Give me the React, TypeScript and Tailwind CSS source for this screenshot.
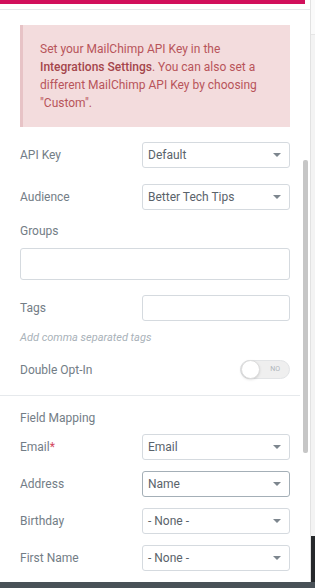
import React from 'react';

const Caret = () => (
  <svg width="8" height="4" viewBox="0 0 8 4" className="shrink-0">
    <path d="M0 0 L8 0 L4 4 Z" fill="#7d868e" />
  </svg>
);

const Select = ({ value, active = false }: { value: string; active?: boolean }) => (
  <div
    className={`flex h-[26px] w-[148px] items-center justify-between rounded-[3px] border bg-white pl-[5px] pr-[8px] text-[12px] text-[#5a636b] ${
      active ? 'border-[#a4afb7]' : 'border-[#d5dadf]'
    }`}
  >
    <span>{value}</span>
    <Caret />
  </div>
);

const Row = ({ label, children, className = '' }: { label: React.ReactNode; children: React.ReactNode; className?: string }) => (
  <div className={`flex items-center justify-between ${className}`}>
    <span className="text-[12px] text-[#737d86]">{label}</span>
    {children}
  </div>
);

export default function App() {
  return (
    <div className="flex h-[588px] w-[315px] flex-col overflow-hidden bg-white" style={{ fontFamily: 'Roboto, "Noto Sans", sans-serif' }}>
      <div className="flex h-[582px]">
        {/* Panel */}
        <div className="flex w-[310px] flex-col">
          <div className="h-[4px] w-[305px] bg-[#d1105c]" />
          <div className="h-[6px] border-b border-[#e6e9ec]" />

          <div className="flex flex-1">
            {/* Scroll content */}
            <div className="flex w-[300px] flex-col">
              <div className="pl-5 pr-[10px] pt-[15px]">
                {/* Notice */}
                <div className="h-[102px] border-l-[3px] border-[#e7c3c6] bg-[#f3dcdd] py-[15px] pl-[17px] pr-[14px] text-[12px] leading-[18px] text-[#b8545a]">
                  <p>
                    Set your MailChimp API Key in the <b className="font-medium text-[#a4454b]">Integrations Settings</b>. You can also set a different MailChimp API Key by choosing "Custom".
                  </p>
                </div>

                <Row label="API Key" className="mt-[15px]">
                  <Select value="Default" />
                </Row>
                <Row label="Audience" className="mt-[16px]">
                  <Select value="Better Tech Tips" />
                </Row>

                <div className="mt-[14px] text-[12px] leading-[14px] text-[#737d86]">Groups</div>
                <div className="mt-[10px] h-[32px] rounded-[3px] border border-[#d5dadf] bg-white" />

                <Row label="Tags" className="mt-[15px]">
                  <div className="h-[26px] w-[148px] rounded-[3px] border border-[#d5dadf] bg-white" />
                </Row>
                <div className="mt-[10px] text-[11px] italic leading-[14px] text-[#a9b2b9]">Add comma separated tags</div>

                <Row label="Double Opt-In" className="mt-[15px]">
                  <div className="relative flex h-[19px] w-[50px] items-center justify-end rounded-full border border-[#e2e4e6] bg-[#efefef] pr-[9px]">
                    <div className="absolute left-0 top-[-1px] h-[19px] w-[19px] rounded-full border border-[#dcdcdc] bg-white shadow-sm" />
                    <span className="text-[7px] text-[#b0b6bb]">NO</span>
                  </div>
                </Row>
              </div>

              <div className="mt-[16px] border-t border-[#e6e9ec]" />

              <div className="pl-5 pr-[10px]">
                <div className="mt-[15px] text-[12px] leading-[14px] text-[#737d86]">Field Mapping</div>
                <Row
                  label={
                    <>
                      Email<span className="text-[#d3485d]">*</span>
                    </>
                  }
                  className="mt-[9px]"
                >
                  <Select value="Email" />
                </Row>
                <Row label="Address" className="mt-[11px]">
                  <Select value="Name" active />
                </Row>
                <Row label="Birthday" className="mt-[11px]">
                  <Select value="- None -" />
                </Row>
                <Row label="First Name" className="mt-[11px]">
                  <Select value="- None -" />
                </Row>
              </div>
            </div>

            {/* Scrollbar */}
            <div className="flex w-[10px] justify-center">
              <div className="mt-[150px] h-[293px] w-[5px] rounded-[2px] bg-[#c6c6c6]" />
            </div>
          </div>
        </div>

        {/* Right edge */}
        <div className="flex w-[5px] flex-col border-l border-[#e2e2e2]">
          <div className="h-[35px] border-b border-[#e6e6e6] bg-[#fafafa]" />
          <div className="h-[501px] bg-[#f3f3f3]" />
          <div className="flex-1 bg-[#26282b]" />
        </div>
      </div>
      <div className="h-[6px] bg-[#495157]" />
    </div>
  );
}
